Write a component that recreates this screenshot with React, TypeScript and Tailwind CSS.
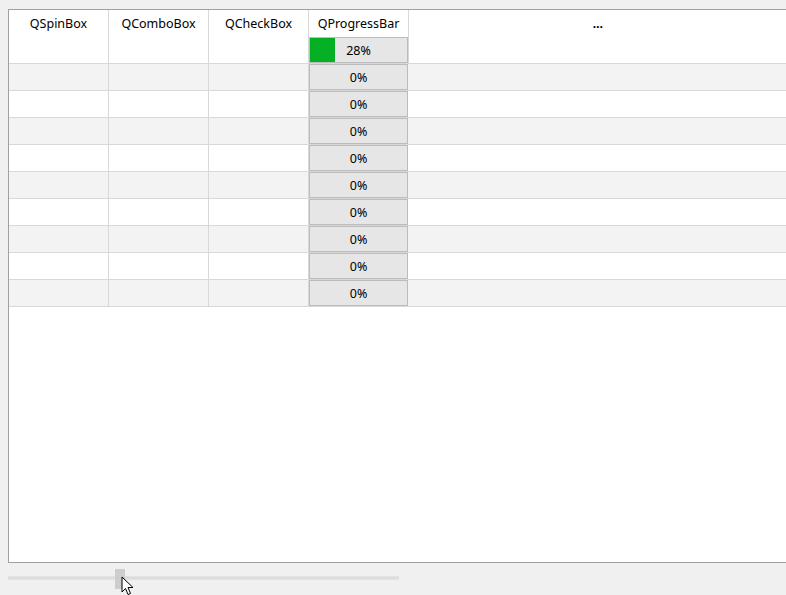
import React from "react";

const Bar = ({ pct }: { pct: number }) => (
  <div className="relative h-[26px] w-[99px] border border-[#bcbcbc] bg-[#e6e6e6]">
    {pct > 0 && (
      <div className="absolute left-0 top-0 h-full bg-[#06b025]" style={{ width: `${Math.round(pct * 0.9)}px` }} />
    )}
    <div className="relative flex h-full items-center justify-center pt-[3px] text-[12.5px] text-black">{pct}%</div>
  </div>
);

export default function App() {
  const rows = Array.from({ length: 9 }, (_, i) => i);
  return (
    <div
      className="relative h-[595px] w-[786px] overflow-hidden bg-[#f0f0f0]"
      style={{ fontFamily: '"Noto Sans", "Noto Sans CJK SC", sans-serif' }}
    >
      <div className="ml-[8px] mt-[9px] h-[554px] w-[790px] border border-r-0 border-[#a0a0a0] bg-white">
        <div className="flex h-[54px] border-b border-[#d8d8d8]">
          {["QSpinBox", "QComboBox", "QCheckBox"].map((t) => (
            <div key={t} className="w-[100px] border-r border-[#d8d8d8] pt-[6px] text-center text-[12.5px] leading-[16px] text-black">
              {t}
            </div>
          ))}
          <div className="flex w-[100px] flex-col border-r border-[#d8d8d8]">
            <div className="h-[27px] pt-[6px] text-center text-[12.5px] leading-[16px] text-black">QProgressBar</div>
            <Bar pct={28} />
          </div>
          <div className="w-[378px] pt-[6px] text-center text-[12px] font-bold leading-[16px] text-black">…</div>
        </div>
        {rows.map((i) => (
          <div key={i} className={`flex h-[27px] border-b border-[#d8d8d8] ${i % 2 === 0 ? "bg-[#f3f3f3]" : "bg-white"}`}>
            <div className="w-[100px] border-r border-[#d8d8d8]" />
            <div className="w-[100px] border-r border-[#d8d8d8]" />
            <div className="w-[100px] border-r border-[#d8d8d8]" />
            <div className="w-[100px]">
              <Bar pct={0} />
            </div>
            <div className="flex-1" />
          </div>
        ))}
      </div>
      <div className="relative ml-[8px] mt-[6px] h-[20px] w-[391px]">
        <div className="absolute left-0 right-0 top-[7px] h-[4px] border-y border-[#e2e2e2] bg-[#dcdcdc]" />
        <div className="absolute left-[107px] top-0 h-[20px] w-[10px] bg-[#cdcdcd]" />
      </div>
      <svg className="absolute left-[121px] top-[576px]" width="14" height="20" viewBox="0 0 14 20">
        <path d="M1 1 L1 16 L4.5 12.5 L7 18.5 L9.5 17.5 L7 11.5 L12 11.5 Z" fill="white" stroke="black" strokeWidth="1" strokeLinejoin="round" />
      </svg>
    </div>
  );
}
